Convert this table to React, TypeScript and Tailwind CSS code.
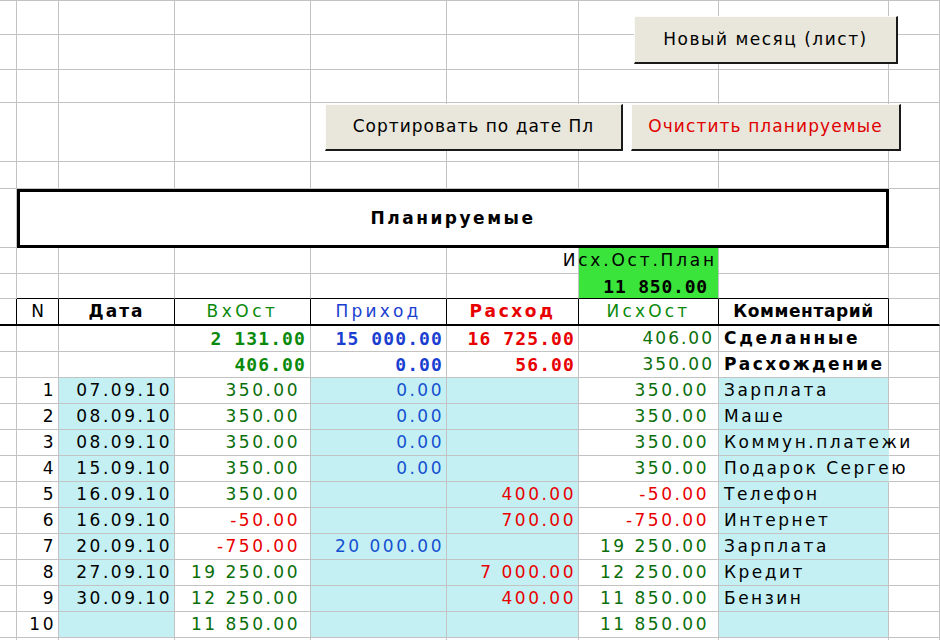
import { twMerge } from "tailwind-merge";
import type { ReactNode } from "react";

const num = "font-['DejaVu_Sans',sans-serif] text-[17px] tracking-[2.5px]";
const numBold = "font-['DejaVu_Sans_Mono',monospace] text-[18px] font-bold tracking-[1.1px]";
const sans = "font-['DejaVu_Sans',sans-serif] text-[17px]";
const cyan = "bg-[#c4f0f4]";
const green = "bg-[#3ae43a]";

function C({ className = "", children }: { className?: string; children?: ReactNode }) {
    return (
        <div className={twMerge("flex items-center whitespace-nowrap border-r border-b border-[#c3c3c3]", className)}>
            {children}
        </div>
    );
}

const blank = (n: number, prefix: string) => Array.from({ length: n }, (_, i) => <C key={`${prefix}-${i}`} />);

interface Row {
    n: number;
    date: string;
    vx: string;
    inc: string;
    out: string;
    isx: string;
    comment: string;
    overflow?: boolean;
}

const rows: Row[] = [
    { n: 1, date: "07.09.10", vx: "350.00", inc: "0.00", out: "", isx: "350.00", comment: "Зарплата" },
    { n: 2, date: "08.09.10", vx: "350.00", inc: "0.00", out: "", isx: "350.00", comment: "Маше" },
    { n: 3, date: "08.09.10", vx: "350.00", inc: "0.00", out: "", isx: "350.00", comment: "Коммун.платежи", overflow: true },
    { n: 4, date: "15.09.10", vx: "350.00", inc: "0.00", out: "", isx: "350.00", comment: "Подарок Сергею", overflow: true },
    { n: 5, date: "16.09.10", vx: "350.00", inc: "", out: "400.00", isx: "-50.00", comment: "Телефон" },
    { n: 6, date: "16.09.10", vx: "-50.00", inc: "", out: "700.00", isx: "-750.00", comment: "Интернет" },
    { n: 7, date: "20.09.10", vx: "-750.00", inc: "20 000.00", out: "", isx: "19 250.00", comment: "Зарплата" },
    { n: 8, date: "27.09.10", vx: "19 250.00", inc: "", out: "7 000.00", isx: "12 250.00", comment: "Кредит" },
    { n: 9, date: "30.09.10", vx: "12 250.00", inc: "", out: "400.00", isx: "11 850.00", comment: "Бензин" },
    { n: 10, date: "", vx: "11 850.00", inc: "", out: "", isx: "11 850.00", comment: "" },
];

const sign = (v: string) => (v.startsWith("-") ? "text-[#e80000]" : "text-[#0a6e0a]");

function Btn({ className, children }: { className: string; children: ReactNode }) {
    return (
        <button
            className={twMerge(
                "absolute flex items-center justify-center bg-[#e9e7db] border-t border-l border-[#fbfbf7] border-r-2 border-b-2 border-r-[#1a1a1a] border-b-[#1a1a1a] tracking-[1.5px] text-black",
                sans,
                className
            )}
        >
            {children}
        </button>
    );
}

export default function App() {
    return (
        <div className="relative w-[940px] h-[640px] overflow-hidden bg-white text-black">
            <div className="grid grid-cols-[17px_42px_116px_136px_136px_132px_140px_170px_51px] grid-rows-[34px_35px_33px_59px_27px_59px_26px_25px_27px_26px_26px] auto-rows-[26px] border-t border-[#c3c3c3]">
                {blank(9, "r0")}
                {blank(9, "r1")}
                {blank(9, "r2")}
                {blank(9, "r3")}
                {blank(9, "r4")}

                {/* title */}
                <C />
                <C className={`col-span-7 justify-center border-[3px] border-black font-bold tracking-[2.5px] ${sans}`}>
                    Планируемые
                </C>
                <C />

                {/* plan balance */}
                {blank(6, "r6")}
                <C className={`${green} ${num} justify-end pr-[1px] border-b-[#3ae43a] tracking-[2.8px]`}>Исх.Ост.План</C>
                {blank(2, "r6b")}

                <C />
                {Array.from({ length: 5 }, (_, i) => (
                    <C key={`r7-${i}`} className="border-b-black" />
                ))}
                <C className={`${green} ${numBold} justify-end pr-[10px] border-b-black tracking-[0.8px]`}>11 850.00</C>
                <C className="border-b-black" />
                <C />

                {/* header */}
                <C className="border-r-black border-b-2 border-b-black" />
                <C className={`justify-center border-black border-b-2 ${sans}`}>N</C>
                <C className={`justify-center border-black border-b-2 font-bold tracking-[2px] ${sans}`}>Дата</C>
                <C className={`justify-center border-black border-b-2 tracking-[3.5px] text-[#0a8a0a] ${sans}`}>ВхОст</C>
                <C className={`justify-center border-black border-b-2 tracking-[3.2px] text-[#1a3fd0] ${sans}`}>Приход</C>
                <C className={`justify-center border-black border-b-2 font-bold tracking-[2.6px] text-[#e80000] ${sans}`}>Расход</C>
                <C className={`justify-center border-black border-b-2 tracking-[3.2px] text-[#0a8a0a] ${sans}`}>ИсхОст</C>
                <C className={`justify-center border-black border-b-2 font-bold tracking-[0.6px] ${sans}`}>Комментарий</C>
                <C className="border-b-2 border-b-black" />

                {/* summary */}
                {blank(3, "s1")}
                <C className={`${numBold} justify-end pr-[4px] text-[#0a8a0a]`}>2 131.00</C>
                <C className={`${numBold} justify-end pr-[3px] text-[#1a3fd0]`}>15 000.00</C>
                <C className={`${numBold} justify-end pr-[3px] text-[#e80000]`}>16 725.00</C>
                <C className={`${num} tracking-[2px] justify-end pr-[4px] text-[#0a6e0a]`}>406.00</C>
                <C className={`${sans} font-bold tracking-[2.7px] pl-[5px]`}>Сделанные</C>
                <C />

                {blank(3, "s2")}
                <C className={`${numBold} justify-end pr-[4px] text-[#0a8a0a]`}>406.00</C>
                <C className={`${numBold} justify-end pr-[3px] text-[#1a3fd0]`}>0.00</C>
                <C className={`${numBold} justify-end pr-[3px] text-[#e80000]`}>56.00</C>
                <C className={`${num} tracking-[2px] justify-end pr-[4px] text-[#0a6e0a]`}>350.00</C>
                <C className={`${sans} font-bold tracking-[2.4px] pl-[5px]`}>Расхождение</C>
                <C />

                {/* data */}
                {rows.map((r) => [
                    <C key={`${r.n}-a`} />,
                    <C key={`${r.n}-n`} className={`${num} justify-end pr-[2px]`}>{r.n}</C>,
                    <C key={`${r.n}-d`} className={`${num} ${cyan} justify-end pr-[2px]`}>{r.date}</C>,
                    <C key={`${r.n}-v`} className={`${num} ${sign(r.vx)} justify-end pr-[10px]`}>{r.vx}</C>,
                    <C key={`${r.n}-i`} className={`${num} ${cyan} text-[#1450d0] justify-end pr-[2px]`}>{r.inc}</C>,
                    <C key={`${r.n}-o`} className={`${num} ${cyan} text-[#e80000] justify-end pr-[2px]`}>{r.out}</C>,
                    <C key={`${r.n}-x`} className={`${num} ${sign(r.isx)} justify-end pr-[9px]`}>{r.isx}</C>,
                    <C key={`${r.n}-c`} className={`${num} ${cyan} pl-[5px] ${r.overflow ? "border-r-transparent" : ""}`}>{r.comment}</C>,
                    <C key={`${r.n}-z`} />,
                ])}
                {blank(9, "tail")}
            </div>

            <Btn className="left-[634px] top-[16px] w-[264px] h-[48px]">Новый месяц (лист)</Btn>
            <Btn className="left-[325px] top-[104px] w-[298px] h-[47px] tracking-[1px]">Сортировать по дате Пл</Btn>
            <Btn className="left-[631px] top-[104px] w-[270px] h-[47px] tracking-[1.1px] text-[#e00000]">Очистить планируемые</Btn>
        </div>
    );
}
